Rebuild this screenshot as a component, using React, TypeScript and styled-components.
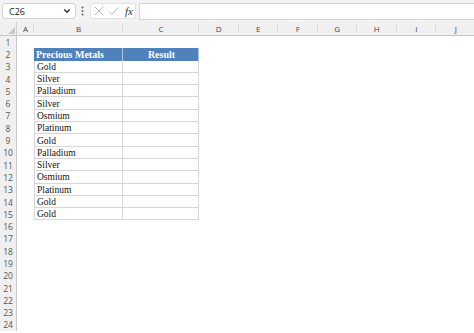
import React from "react";
import styled, { createGlobalStyle } from "styled-components";

const GlobalStyle = createGlobalStyle`
  html, body { margin: 0; padding: 0; background: #fff; }
  body { font-family: "Open Sans", "Noto Sans", sans-serif; overflow: hidden; }
`;

const Window = styled.div`
  width: 474px;
  height: 333px;
  overflow: hidden;
  background: #fff;
  display: flex;
  flex-direction: column;
`;

const Toolbar = styled.div`
  height: 22px;
  flex: none;
  display: flex;
  align-items: center;
  padding-left: 2px;
  background: #f3f3f3;
  box-sizing: border-box;
`;

const NameBox = styled.div`
  width: 74px;
  height: 16px;
  box-sizing: border-box;
  background: #fff;
  border: 1px solid #d4d4d4;
  border-radius: 3px;
  display: flex;
  align-items: center;
  justify-content: space-between;
  padding: 0 4px 0 6px;
  font-size: 9px;
  color: #222;
`;

const Dots = styled.div`
  width: 4px;
  margin-left: 4px;
  display: flex;
  justify-content: center;
`;

const FxBox = styled.div`
  margin-left: 6px;
  width: 46px;
  height: 16px;
  box-sizing: border-box;
  background: #fff;
  border: 1px solid #e2e2e2;
  border-radius: 2px;
  display: flex;
  align-items: center;
  gap: 4px;
  padding-left: 3px;
`;

const Fx = styled.span`
  font-family: "Liberation Serif", serif;
  font-style: italic;
  font-size: 11px;
  color: #333;
  margin-left: 2px;
`;

const Formula = styled.div`
  margin-left: 3px;
  flex: 1;
  height: 17px;
  box-sizing: border-box;
  background: #fff;
  border: 1px solid #d4d4d4;
  border-right: none;
`;

const Sheet = styled.div`
  flex: 1;
  display: grid;
  grid-template-columns: 17px 17px 89px 76px repeat(8, 39.5px);
  grid-template-rows: 14px repeat(24, 12.3px);
  overflow: hidden;
`;

const Corner = styled.div`
  background: #f0f0f0;
  border-bottom: 1px solid #c6c6c6;
  border-right: 1px solid #d0d0d0;
  box-sizing: border-box;
  display: flex;
  align-items: flex-end;
  justify-content: flex-end;
  padding: 0 1px 1px 0;
`;

const ColHeader = styled.div`
  position: relative;
  background: #f0f0f0;
  border-bottom: 1px solid #c6c6c6;
  box-sizing: border-box;
  display: flex;
  align-items: center;
  justify-content: center;
  font-size: 8px;
  color: #444;
  &::after {
    content: "";
    position: absolute;
    right: 0;
    top: 3px;
    bottom: 3px;
    width: 1px;
    background: #d8d8d8;
  }
`;

const RowHeader = styled.div`
  background: #f0f0f0;
  border-right: 1px solid #c6c6c6;
  box-sizing: border-box;
  display: flex;
  align-items: center;
  justify-content: center;
  font-size: 8.5px;
  color: #555;
`;

type Kind = "none" | "head" | "body";

const Cell = styled.div<{ $kind: Kind; $first?: boolean; $center?: boolean }>`
  box-sizing: border-box;
  display: flex;
  align-items: center;
  justify-content: ${(p) => (p.$center ? "center" : "flex-start")};
  padding-left: 2px;
  padding-top: 1px;
  font-family: "Liberation Serif", serif;
  white-space: nowrap;
  overflow: hidden;
  background: ${(p) => (p.$kind === "head" ? "#4f81bd" : "#fff")};
  color: ${(p) => (p.$kind === "head" ? "#fff" : "#111")};
  font-weight: ${(p) => (p.$kind === "head" ? 700 : 400)};
  font-size: ${(p) => (p.$kind === "head" ? "10px" : "9.5px")};
  border-right: ${(p) =>
    p.$kind === "head" ? "1px solid #a9c3e3" : p.$kind === "body" ? "1px solid #d6d6d6" : "none"};
  border-bottom: ${(p) => (p.$kind === "body" ? "1px solid #d6d6d6" : "none")};
  border-left: ${(p) => (p.$kind !== "none" && p.$first ? "1px solid #d6d6d6" : "none")};
`;

const COLS = ["A", "B", "C", "D", "E", "F", "G", "H", "I", "J", ""];
const METALS = [
  "Gold",
  "Silver",
  "Palladium",
  "Silver",
  "Osmium",
  "Platinum",
  "Gold",
  "Palladium",
  "Silver",
  "Osmium",
  "Platinum",
  "Gold",
  "Gold",
];

const Chevron = () => (
  <svg width="8" height="6" viewBox="0 0 8 6">
    <path d="M1.2 1.5 L4 4.3 L6.8 1.5" fill="none" stroke="#333" strokeWidth="1.4" />
  </svg>
);

export default function App() {
  const rows = Array.from({ length: 24 }, (_, i) => i + 1);
  return (
    <Window>
      <GlobalStyle />
      <Toolbar>
        <NameBox>
          <span>C26</span>
          <Chevron />
        </NameBox>
        <Dots>
          <svg width="3" height="10" viewBox="0 0 3 10">
            <circle cx="1.5" cy="1.5" r="0.9" fill="#555" />
            <circle cx="1.5" cy="5" r="0.9" fill="#555" />
            <circle cx="1.5" cy="8.5" r="0.9" fill="#555" />
          </svg>
        </Dots>
        <FxBox>
          <svg width="10" height="10" viewBox="0 0 10 10">
            <path d="M1 1 L9 9 M9 1 L1 9" stroke="#b4b4b4" strokeWidth="1" />
          </svg>
          <svg width="11" height="10" viewBox="0 0 11 10">
            <path d="M1 5.5 L4 8.5 L10 1.5" fill="none" stroke="#b4b4b4" strokeWidth="1" />
          </svg>
          <Fx>fx</Fx>
        </FxBox>
        <Formula />
      </Toolbar>
      <Sheet>
        <Corner>
          <svg width="7" height="7" viewBox="0 0 7 7">
            <polygon points="7,0 7,7 0,7" fill="#c8c8c8" />
          </svg>
        </Corner>
        {COLS.map((c, i) => (
          <ColHeader key={i}>{c}</ColHeader>
        ))}
        {rows.map((r) => (
          <React.Fragment key={r}>
            <RowHeader>{r}</RowHeader>
            {COLS.map((c, ci) => {
              if (r === 2 && c === "B")
                return (
                  <Cell key={ci} $kind="head">
                    Precious Metals
                  </Cell>
                );
              if (r === 2 && c === "C")
                return (
                  <Cell key={ci} $kind="head" $center>
                    Result
                  </Cell>
                );
              if (r >= 3 && r <= 15 && c === "B")
                return (
                  <Cell key={ci} $kind="body" $first>
                    {METALS[r - 3]}
                  </Cell>
                );
              if (r >= 3 && r <= 15 && c === "C") return <Cell key={ci} $kind="body" />;
              return <Cell key={ci} $kind="none" />;
            })}
          </React.Fragment>
        ))}
      </Sheet>
    </Window>
  );
}
